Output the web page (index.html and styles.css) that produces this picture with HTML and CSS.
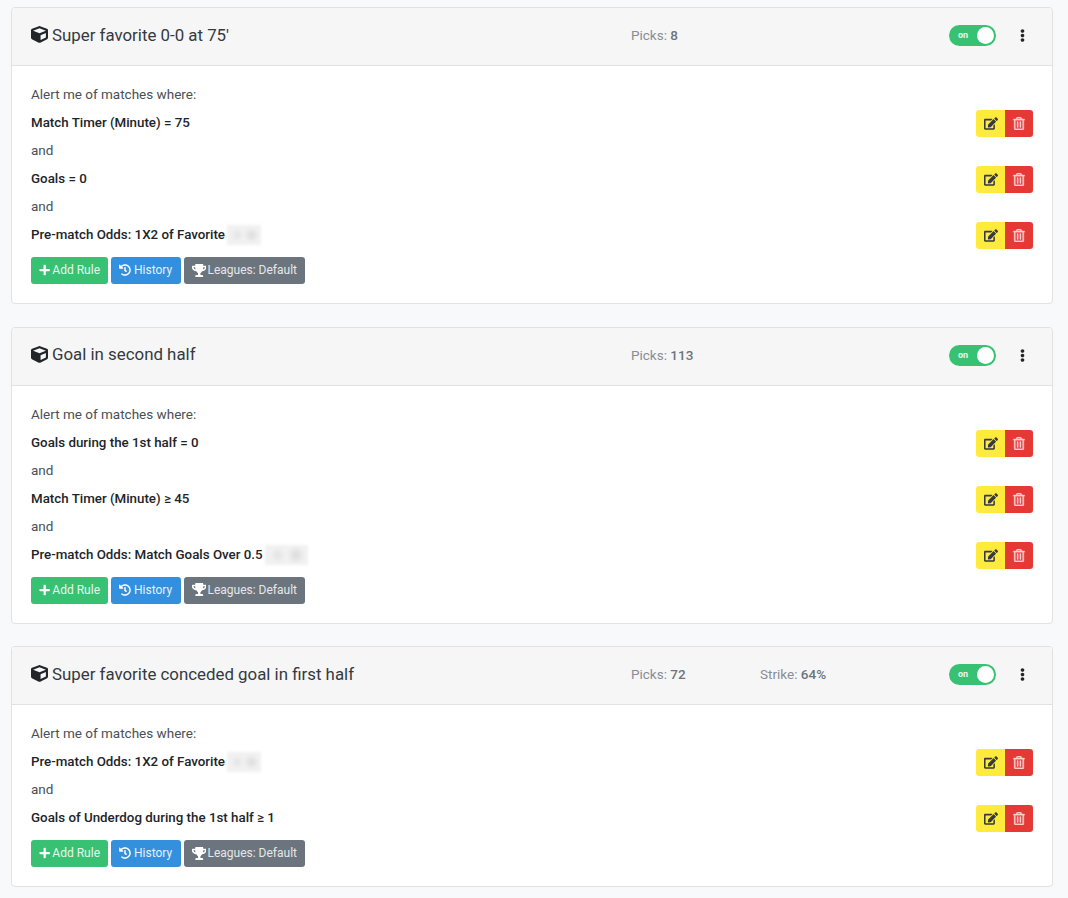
FILE: index.html
```html
<!DOCTYPE html>
<html lang="en">
<head>
<meta charset="utf-8">
<title>Alerts</title>
<link rel="stylesheet" href="styles.css">
</head>
<body>
<svg class="defs" width="0" height="0" aria-hidden="true">
  <symbol id="i-cube" viewBox="0 0 512 512"><path d="M239.1 6.3l-208 78c-18.7 7-31.1 25-31.1 45v225.1c0 18.2 10.3 34.8 26.5 42.9l208 104c13.5 6.8 29.4 6.8 42.9 0l208-104c16.3-8.1 26.5-24.8 26.5-42.9V129.3c0-20-12.4-37.9-31.1-44.9l-208-78C262 2.2 250 2.2 239.1 6.3zM256 68.4l192 72v1.1l-192 78-192-78v-1.1l192-72zm32 356V275.5l160-65v133.9l-160 80z"/></symbol>
  <symbol id="i-plus" viewBox="0 0 448 512"><path d="M416 208H272V64c0-17.67-14.33-32-32-32h-32c-17.67 0-32 14.33-32 32v144H32c-17.67 0-32 14.33-32 32v32c0 17.67 14.33 32 32 32h144v144c0 17.67 14.33 32 32 32h32c17.67 0 32-14.33 32-32V304h144c17.67 0 32-14.33 32-32v-32c0-17.67-14.33-32-32-32z"/></symbol>
  <symbol id="i-history" viewBox="0 0 512 512"><path d="M504 255.531c.253 136.64-111.18 248.372-247.82 248.468-59.015.042-113.223-20.53-155.822-54.911-11.077-8.94-11.905-25.541-1.839-35.607l11.267-11.267c8.609-8.609 22.353-9.551 31.891-1.984C173.062 425.135 212.781 440 256 440c101.705 0 184-82.311 184-184 0-101.705-82.311-184-184-184-48.814 0-93.149 18.969-126.068 49.932l50.754 50.754c10.08 10.08 2.941 27.314-11.313 27.314H24c-8.837 0-16-7.163-16-16V38.627c0-14.254 17.234-21.393 27.314-11.314l49.372 49.372C129.209 34.136 189.552 8 256 8c136.81 0 247.747 110.78 248 247.531zm-180.912 78.784l9.823-12.63c8.138-10.463 6.253-25.542-4.21-33.679L288 256.349V152c0-13.255-10.745-24-24-24h-16c-13.255 0-24 10.745-24 24v135.651l65.409 50.874c10.463 8.137 25.541 6.253 33.679-4.21z"/></symbol>
  <symbol id="i-trophy" viewBox="0 0 576 512"><path d="M552 64H448V24c0-13.3-10.7-24-24-24H152c-13.3 0-24 10.7-24 24v40H24C10.7 64 0 74.7 0 88v56c0 35.7 22.5 72.4 61.9 100.7 31.5 22.7 69.8 37.1 110 41.7C203.3 338.5 240 360 240 360v72h-48c-35.3 0-64 20.7-64 56v12c0 6.6 5.4 12 12 12h296c6.6 0 12-5.4 12-12v-12c0-35.3-28.7-56-64-56h-48v-72s36.7-21.5 68.1-73.6c40.3-4.6 78.6-19 110-41.7 39.3-28.3 61.9-65 61.9-100.7V88c0-13.3-10.7-24-24-24zM99.3 192.8C74.9 175.2 64 155.6 64 144v-16h64.2c1 32.6 5.8 61.2 12.8 86.2-15.1-5.2-29.2-12.4-41.7-21.4zM512 144c0 16.1-17.7 36.1-35.3 48.8-12.5 9-26.7 16.2-41.8 21.4 7-25 11.8-53.6 12.8-86.2H512v16z"/></symbol>
  <symbol id="i-edit" viewBox="0 0 576 512"><path d="M402.6 83.2l90.2 90.2c3.8 3.8 3.8 10 0 13.8L274.4 405.6l-92.8 10.3c-12.4 1.4-22.9-9.1-21.5-21.5l10.3-92.8L388.8 83.2c3.8-3.8 10-3.8 13.8 0zm162-22.9l-48.8-48.8c-15.2-15.2-39.9-15.2-55.2 0l-35.4 35.4c-3.8 3.8-3.8 10 0 13.8l90.2 90.2c3.8 3.8 10 3.8 13.8 0l35.4-35.4c15.2-15.3 15.2-40 0-55.2zM384 346.2V448H64V128h229.8c3.2 0 6.2-1.3 8.5-3.5l40-40c7.6-7.6 2.2-20.5-8.5-20.5H48C21.5 64 0 85.5 0 112v352c0 26.5 21.5 48 48 48h352c26.5 0 48-21.5 48-48V306.2c0-10.7-12.9-16-20.5-8.5l-40 40c-2.2 2.3-3.5 5.3-3.5 8.5z"/></symbol>
  <symbol id="i-trash" viewBox="0 0 448 512"><path d="M268 416h24a12 12 0 0 0 12-12V188a12 12 0 0 0-12-12h-24a12 12 0 0 0-12 12v216a12 12 0 0 0 12 12zM432 80h-82.41l-34-56.7A48 48 0 0 0 274.41 0H173.59a48 48 0 0 0-41.16 23.3L98.41 80H16A16 16 0 0 0 0 96v16a16 16 0 0 0 16 16h16v336a48 48 0 0 0 48 48h288a48 48 0 0 0 48-48V128h16a16 16 0 0 0 16-16V96a16 16 0 0 0-16-16zM171.84 50.91A6 6 0 0 1 177 48h94a6 6 0 0 1 5.15 2.91L293.61 80H154.39zM368 464H80V128h288zm-212-48h24a12 12 0 0 0 12-12V188a12 12 0 0 0-12-12h-24a12 12 0 0 0-12 12v216a12 12 0 0 0 12 12z"/></symbol>
  <symbol id="i-dots" viewBox="0 0 192 512"><path d="M96 184c39.8 0 72 32.2 72 72s-32.2 72-72 72-72-32.2-72-72 32.2-72 72-72zM24 80c0 39.8 32.2 72 72 72s72-32.2 72-72S135.8 8 96 8 24 40.2 24 80zm0 352c0 39.8 32.2 72 72 72s72-32.2 72-72-32.2-72-72-72-72 32.2-72 72z"/></symbol>
</svg>

<main class="page">
  <section class="card">
    <header class="card-head">
      <h2 class="title"><svg class="ico-cube"><use href="#i-cube"/></svg>Super favorite 0-0 at 75'</h2>
      <div class="stat">Picks: <b>8</b></div>
      <div class="switch"><span class="switch-label">on</span><span class="knob"></span></div>
      <svg class="ico-dots"><use href="#i-dots"/></svg>
    </header>
    <div class="card-body">
      <p class="line">Alert me of matches where:</p>
      <div class="line rule"><span class="rule-text">Match Timer (Minute) = 75</span><div class="actions"><span class="act act-edit"><svg class="ico-act"><use href="#i-edit"/></svg></span><span class="act act-del"><svg class="ico-act"><use href="#i-trash"/></svg></span></div></div>
      <p class="line">and</p>
      <div class="line rule"><span class="rule-text">Goals = 0</span><div class="actions"><span class="act act-edit"><svg class="ico-act"><use href="#i-edit"/></svg></span><span class="act act-del"><svg class="ico-act"><use href="#i-trash"/></svg></span></div></div>
      <p class="line">and</p>
      <div class="line rule"><span class="rule-text">Pre-match Odds: 1X2 of Favorite</span><span class="blur blur-s"></span><div class="actions"><span class="act act-edit"><svg class="ico-act"><use href="#i-edit"/></svg></span><span class="act act-del"><svg class="ico-act"><use href="#i-trash"/></svg></span></div></div>
      <div class="buttons">
        <span class="btn btn-green"><svg class="ico-btn"><use href="#i-plus"/></svg>Add Rule</span>
        <span class="btn btn-blue"><svg class="ico-btn"><use href="#i-history"/></svg>History</span>
        <span class="btn btn-gray"><svg class="ico-btn ico-trophy"><use href="#i-trophy"/></svg>Leagues: Default</span>
      </div>
    </div>
  </section>

  <section class="card">
    <header class="card-head">
      <h2 class="title"><svg class="ico-cube"><use href="#i-cube"/></svg>Goal in second half</h2>
      <div class="stat">Picks: <b>113</b></div>
      <div class="switch"><span class="switch-label">on</span><span class="knob"></span></div>
      <svg class="ico-dots"><use href="#i-dots"/></svg>
    </header>
    <div class="card-body">
      <p class="line">Alert me of matches where:</p>
      <div class="line rule"><span class="rule-text">Goals during the 1st half = 0</span><div class="actions"><span class="act act-edit"><svg class="ico-act"><use href="#i-edit"/></svg></span><span class="act act-del"><svg class="ico-act"><use href="#i-trash"/></svg></span></div></div>
      <p class="line">and</p>
      <div class="line rule"><span class="rule-text">Match Timer (Minute) ≥ 45</span><div class="actions"><span class="act act-edit"><svg class="ico-act"><use href="#i-edit"/></svg></span><span class="act act-del"><svg class="ico-act"><use href="#i-trash"/></svg></span></div></div>
      <p class="line">and</p>
      <div class="line rule"><span class="rule-text">Pre-match Odds: Match Goals Over 0.5</span><span class="blur blur-l"></span><div class="actions"><span class="act act-edit"><svg class="ico-act"><use href="#i-edit"/></svg></span><span class="act act-del"><svg class="ico-act"><use href="#i-trash"/></svg></span></div></div>
      <div class="buttons">
        <span class="btn btn-green"><svg class="ico-btn"><use href="#i-plus"/></svg>Add Rule</span>
        <span class="btn btn-blue"><svg class="ico-btn"><use href="#i-history"/></svg>History</span>
        <span class="btn btn-gray"><svg class="ico-btn ico-trophy"><use href="#i-trophy"/></svg>Leagues: Default</span>
      </div>
    </div>
  </section>

  <section class="card">
    <header class="card-head">
      <h2 class="title"><svg class="ico-cube"><use href="#i-cube"/></svg>Super favorite conceded goal in first half</h2>
      <div class="stat">Picks: <b>72</b></div>
      <div class="stat">Strike: <b>64%</b></div>
      <div class="switch"><span class="switch-label">on</span><span class="knob"></span></div>
      <svg class="ico-dots"><use href="#i-dots"/></svg>
    </header>
    <div class="card-body">
      <p class="line">Alert me of matches where:</p>
      <div class="line rule"><span class="rule-text">Pre-match Odds: 1X2 of Favorite</span><span class="blur blur-s"></span><div class="actions"><span class="act act-edit"><svg class="ico-act"><use href="#i-edit"/></svg></span><span class="act act-del"><svg class="ico-act"><use href="#i-trash"/></svg></span></div></div>
      <p class="line">and</p>
      <div class="line rule"><span class="rule-text">Goals of Underdog during the 1st half ≥ 1</span><div class="actions"><span class="act act-edit"><svg class="ico-act"><use href="#i-edit"/></svg></span><span class="act act-del"><svg class="ico-act"><use href="#i-trash"/></svg></span></div></div>
      <div class="buttons">
        <span class="btn btn-green"><svg class="ico-btn"><use href="#i-plus"/></svg>Add Rule</span>
        <span class="btn btn-blue"><svg class="ico-btn"><use href="#i-history"/></svg>History</span>
        <span class="btn btn-gray"><svg class="ico-btn ico-trophy"><use href="#i-trophy"/></svg>Leagues: Default</span>
      </div>
    </div>
  </section>
</main>
</body>
</html>
```
FILE: styles.css
```css
* { box-sizing: border-box; }
html, body { margin: 0; padding: 0; }
body {
  background: #f8f9fa;
  color: #495057;
  font-family: Roboto, "Liberation Sans", sans-serif;
  font-size: 13.5px;
  line-height: 20px;
  overflow: hidden;
}
.defs { display: block; height: 0; }
.page {
  display: flex;
  flex-direction: column;
  gap: 22.5px;
  padding: 7px 15px 0 11px;
}
.card {
  background: #fff;
  border: 1px solid #e1e1e1;
  border-radius: 4px;
}
.card-head {
  display: flex;
  align-items: center;
  height: 58px;
  padding: 0 27px 2px 19px;
  background: #f6f6f6;
  border-bottom: 1px solid #e1e1e1;
  border-radius: 3px 3px 0 0;
}
.title {
  flex: 0 0 600px;
  display: flex;
  align-items: center;
  margin: 0 0 2px;
  font-size: 16.85px;
  line-height: 24px;
  font-weight: 400;
  color: #343a40;
}
.ico-cube { width: 17px; height: 17px; margin-right: 4px; fill: #212529; }
.stat { flex: 0 0 129px; margin-bottom: 1px; color: #868e96; }
.stat b { font-weight: 500; color: #6c757d; }
.switch {
  margin-left: auto;
  display: flex;
  align-items: center;
  justify-content: space-between;
  width: 47px;
  height: 21px;
  padding: 0 2px 0 9px;
  background: #38c172;
  border-radius: 11px;
}
.switch-label { color: #e8f8ef; font-size: 9px; font-weight: 700; line-height: 1; }
.knob { width: 17px; height: 17px; background: #fff; border-radius: 50%; }
.ico-dots { width: 5px; height: 13px; margin-left: 24px; fill: #212529; }
.card-body { padding: 18px 19px 19px 19px; }
.line { margin: 0; height: 28px; }
.rule { display: flex; align-items: flex-start; }
.rule-text { padding-top: 1px; font-weight: 500; color: #212529; font-size: 13.33px; }
.blur {
  display: block;
  height: 20px;
  margin-top: 1px;
  margin-left: 2px;
  background:
    radial-gradient(circle at 30% 50%, #e2e2e2 0, transparent 24%),
    radial-gradient(circle at 72% 50%, #dadada 0, transparent 28%),
    #f1f1f1;
  filter: blur(1.5px);
}
.blur-s { width: 34px; }
.blur-l { width: 43px; }
.actions { display: flex; margin-left: auto; margin-top: -2px; height: 27px; }
.act { display: flex; align-items: center; justify-content: center; width: 29px; height: 27px; }
.act-edit { background: #ffeb3b; border-radius: 3px 0 0 3px; fill: #343a40; }
.act-del { background: #e53935; border-radius: 0 3px 3px 0; fill: #fbd0d0; stroke: #fbd0d0; stroke-width: 14px; width: 28px; }
.ico-act { width: 14px; height: 13px; }
.buttons { display: flex; gap: 3px; margin-top: 5px; }
.btn {
  display: flex;
  flex-shrink: 0;
  align-items: center;
  height: 27px;
  padding: 0 8px 1px;
  border-radius: 3px;
  fill: #fff;
  font-size: 12px;
  line-height: 1;
  white-space: nowrap;
}
.btn-green { background: #38c172; color: #e6f7ed; width: 77px; }
.btn-blue { background: #3490dc; color: #e6f1fb; width: 70px; }
.btn-gray { background: #6c757d; color: #e6e7e9; width: 121px; }
.ico-btn { width: 12px; height: 12px; margin-right: 2px; }
.btn-blue .ico-btn { margin-right: 3px; }
.ico-trophy { width: 16px; height: 13px; margin-right: 1px; }
```
